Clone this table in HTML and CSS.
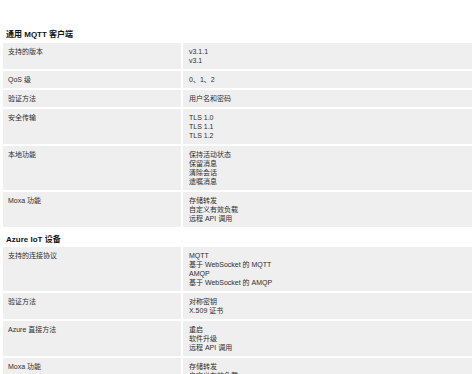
FILE: index.html
```html
<!DOCTYPE html>
<html lang="zh-CN">
<head>
<meta charset="utf-8">
<link rel="stylesheet" href="styles.css">
</head>
<body>
<div class="page">
  <h2 class="title">通用 MQTT 客户端</h2>
  <div class="spec">
    <div class="k">支持的版本</div><div class="v">v3.1.1<br>v3.1</div>
    <div class="k">QoS 级</div><div class="v">0、1、2</div>
    <div class="k">验证方法</div><div class="v">用户名和密码</div>
    <div class="k">安全传输</div><div class="v">TLS 1.0<br>TLS 1.1<br>TLS 1.2</div>
    <div class="k">本地功能</div><div class="v">保持活动状态<br>保留消息<br>清除会话<br>遗嘱消息</div>
    <div class="k">Moxa 功能</div><div class="v">存储转发<br>自定义有效负载<br>远程 API 调用</div>
  </div>
  <h2 class="title second">Azure IoT 设备</h2>
  <div class="spec">
    <div class="k">支持的连接协议</div><div class="v">MQTT<br>基于 WebSocket 的 MQTT<br>AMQP<br>基于 WebSocket 的 AMQP</div>
    <div class="k">验证方法</div><div class="v">对称密钥<br>X.509 证书</div>
    <div class="k">Azure 直接方法</div><div class="v">重启<br>软件升级<br>远程 API 调用</div>
    <div class="k">Moxa 功能</div><div class="v">存储转发<br>自定义有效负载<br>远程 API 调用</div>
  </div>
</div>
</body>
</html>
```
FILE: styles.css
```css
html, body {
  margin: 0;
  padding: 0;
  background: #ffffff;
}
body {
  font-family: "Liberation Sans", "Noto Sans CJK SC", sans-serif;
  color: #2e2e2e;
  overflow: hidden;
}
.page {
  padding: 30px 2px 0 3px;
}
.title {
  margin: 0 0 3px 3px;
  font-size: 8px;
  line-height: 10px;
  font-weight: bold;
  color: #111111;
}
.title.second {
  margin-top: 8px;
  margin-bottom: 2px;
}
.spec {
  display: grid;
  grid-template-columns: 178px 1fr;
  gap: 2px;
  width: 469px;
}
.k, .v {
  background: #efefef;
  font-size: 7px;
  line-height: 9px;
  padding: 4px 6px 4px 5px;
}
.v {
  padding-left: 6px;
}
```
